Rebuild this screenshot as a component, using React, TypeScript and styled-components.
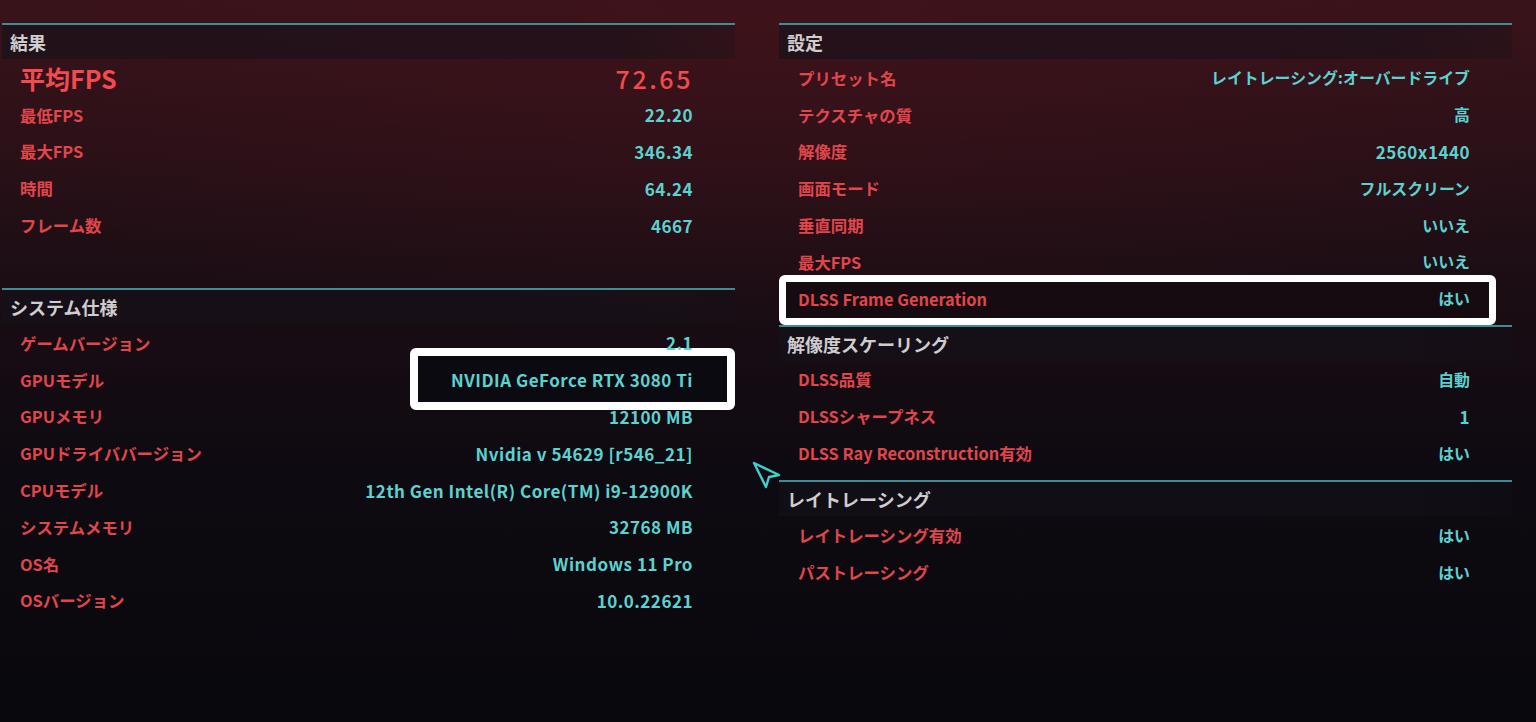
import React, { FC } from 'react'
import styled, { createGlobalStyle } from 'styled-components'

type Item = { label: string; value: string; big?: boolean; mark?: 'value' | 'row' }
type Block = { title: string; items: Item[]; tail: number }

const results: Block = {
	title: '結果',
	tail: 45,
	items: [
		{ label: '平均FPS', value: '72.65', big: true },
		{ label: '最低FPS', value: '22.20' },
		{ label: '最大FPS', value: '346.34' },
		{ label: '時間', value: '64.24' },
		{ label: 'フレーム数', value: '4667' }
	]
}

const system: Block = {
	title: 'システム仕様',
	tail: 0,
	items: [
		{ label: 'ゲームバージョン', value: '2.1' },
		{ label: 'GPUモデル', value: 'NVIDIA GeForce RTX 3080 Ti', mark: 'value' },
		{ label: 'GPUメモリ', value: '12100 MB' },
		{ label: 'GPUドライババージョン', value: 'Nvidia v 54629 [r546_21]' },
		{ label: 'CPUモデル', value: '12th Gen Intel(R) Core(TM) i9-12900K' },
		{ label: 'システムメモリ', value: '32768 MB' },
		{ label: 'OS名', value: 'Windows 11 Pro' },
		{ label: 'OSバージョン', value: '10.0.22621' }
	]
}

const settings: Block = {
	title: '設定',
	tail: 8,
	items: [
		{ label: 'プリセット名', value: 'レイトレーシング:オーバードライブ' },
		{ label: 'テクスチャの質', value: '高' },
		{ label: '解像度', value: '2560x1440' },
		{ label: '画面モード', value: 'フルスクリーン' },
		{ label: '垂直同期', value: 'いいえ' },
		{ label: '最大FPS', value: 'いいえ' },
		{ label: 'DLSS Frame Generation', value: 'はい', mark: 'row' }
	]
}

const scaling: Block = {
	title: '解像度スケーリング',
	tail: 9.5,
	items: [
		{ label: 'DLSS品質', value: '自動' },
		{ label: 'DLSSシャープネス', value: '1' },
		{ label: 'DLSS Ray Reconstruction有効', value: 'はい' }
	]
}

const rayTracing: Block = {
	title: 'レイトレーシング',
	tail: 0,
	items: [
		{ label: 'レイトレーシング有効', value: 'はい' },
		{ label: 'パストレーシング', value: 'はい' }
	]
}

// kana / kanji values are set a little narrower than the latin ones
const isCjk = (s: string) => /[\u3040-\u30ff\u4e00-\u9fff]/.test(s)

const Section: FC<{ block: Block; indent: number }> = ({ block, indent }) => (
	<Sec $tail={block.tail}>
		<Head>{block.title}</Head>
		{block.items.map((it) => (
			<Row key={it.label} $indent={indent}>
				{it.mark === 'value' && <ValueMark />}
				{it.mark === 'row' && <RowMark />}
				<Label $big={it.big}>{it.label}</Label>
				<Value $big={it.big} $cjk={isCjk(it.value)}>
					{it.value}
				</Value>
			</Row>
		))}
	</Sec>
)

const App: FC = () => (
	<>
		<Global />
		<Page>
			<Panel>
				<Section block={results} indent={18} />
				<Section block={system} indent={18} />
			</Panel>
			<Panel>
				<Section block={settings} indent={19} />
				<Section block={scaling} indent={19} />
				<Section block={rayTracing} indent={19} />
			</Panel>
			<Cursor width="30" height="30" viewBox="0 0 30 30">
				<path
					d="M2 2 L27 14 L17 16 L14 26 Z"
					fill="none"
					stroke="#3fd0cc"
					strokeWidth="2.4"
					strokeLinejoin="round"
				/>
			</Cursor>
		</Page>
	</>
)

export default App

const Global = createGlobalStyle`
	html, body {
		margin: 0;
		padding: 0;
		background: #08080d;
	}
	body {
		font-family: "Noto Sans CJK JP", "Noto Sans", sans-serif;
	}
`

const Page = styled.main`
	position: relative;
	width: 1536px;
	height: 722px;
	overflow: hidden;
	box-sizing: border-box;
	padding: 23px 0 0 2px;
	display: flex;
	gap: 44px;
	align-items: flex-start;
	background:
		radial-gradient(ellipse 70% 45% at 50% 0%, rgba(70, 18, 26, 0.55), rgba(70, 18, 26, 0) 100%),
		linear-gradient(180deg, #37131a 0%, #2a1118 18%, #1b0d14 40%, #0e0a11 65%, #09080d 100%);
`

const Panel = styled.div`
	width: 733px;
	display: flex;
	flex-direction: column;
`

const Sec = styled.section<{ $tail: number }>`
	border-top: 2px solid #3f8d93;
	margin-bottom: ${({ $tail }) => $tail}px;
`

const Head = styled.h2`
	margin: 0;
	height: 34px;
	display: flex;
	align-items: center;
	padding-left: 8px;
	font-size: 18px;
	font-weight: 700;
	color: #cfcdd0;
	background: linear-gradient(90deg, rgba(20, 17, 26, 0.6) 0%, rgba(20, 17, 26, 0.55) 85%, rgba(20, 17, 26, 0.3) 100%);
`

const Row = styled.div<{ $indent: number }>`
	position: relative;
	height: 36.8px;
	padding: 1px 42px 0 ${({ $indent }) => $indent}px;
	box-sizing: border-box;
	display: flex;
	align-items: center;
	justify-content: space-between;
`

const Label = styled.span<{ $big?: boolean }>`
	position: relative;
	z-index: 1;
	font-size: ${({ $big }) => ($big ? '25px' : '16.4px')};
	font-weight: 700;
	color: ${({ $big }) => ($big ? '#f24a4f' : '#e0464b')};
	white-space: nowrap;
`

const Value = styled.span<{ $big?: boolean; $cjk?: boolean }>`
	position: relative;
	z-index: 1;
	font-size: ${({ $big, $cjk }) => ($big ? '25px' : $cjk ? '15.9px' : '17px')};
	font-weight: ${({ $big }) => ($big ? 500 : 700)};
	letter-spacing: ${({ $big, $cjk }) => ($big ? '2.6px' : $cjk ? '0' : '0.5px')};
	color: ${({ $big }) => ($big ? '#f24a4f' : '#5cd2d0')};
	white-space: nowrap;
`

const ValueMark = styled.div`
	position: absolute;
	left: 408px;
	right: 0;
	top: -13px;
	bottom: -12px;
	border: 8px solid #ffffff;
	border-radius: 6px;
	background: #0b0a10;
`

const RowMark = styled.div`
	position: absolute;
	left: 0;
	right: 16px;
	top: -5px;
	bottom: -8px;
	border: 7px solid #ffffff;
	border-radius: 6px;
	background: #150b11;
`

const Cursor = styled.svg`
	position: absolute;
	left: 752px;
	top: 461px;
`
